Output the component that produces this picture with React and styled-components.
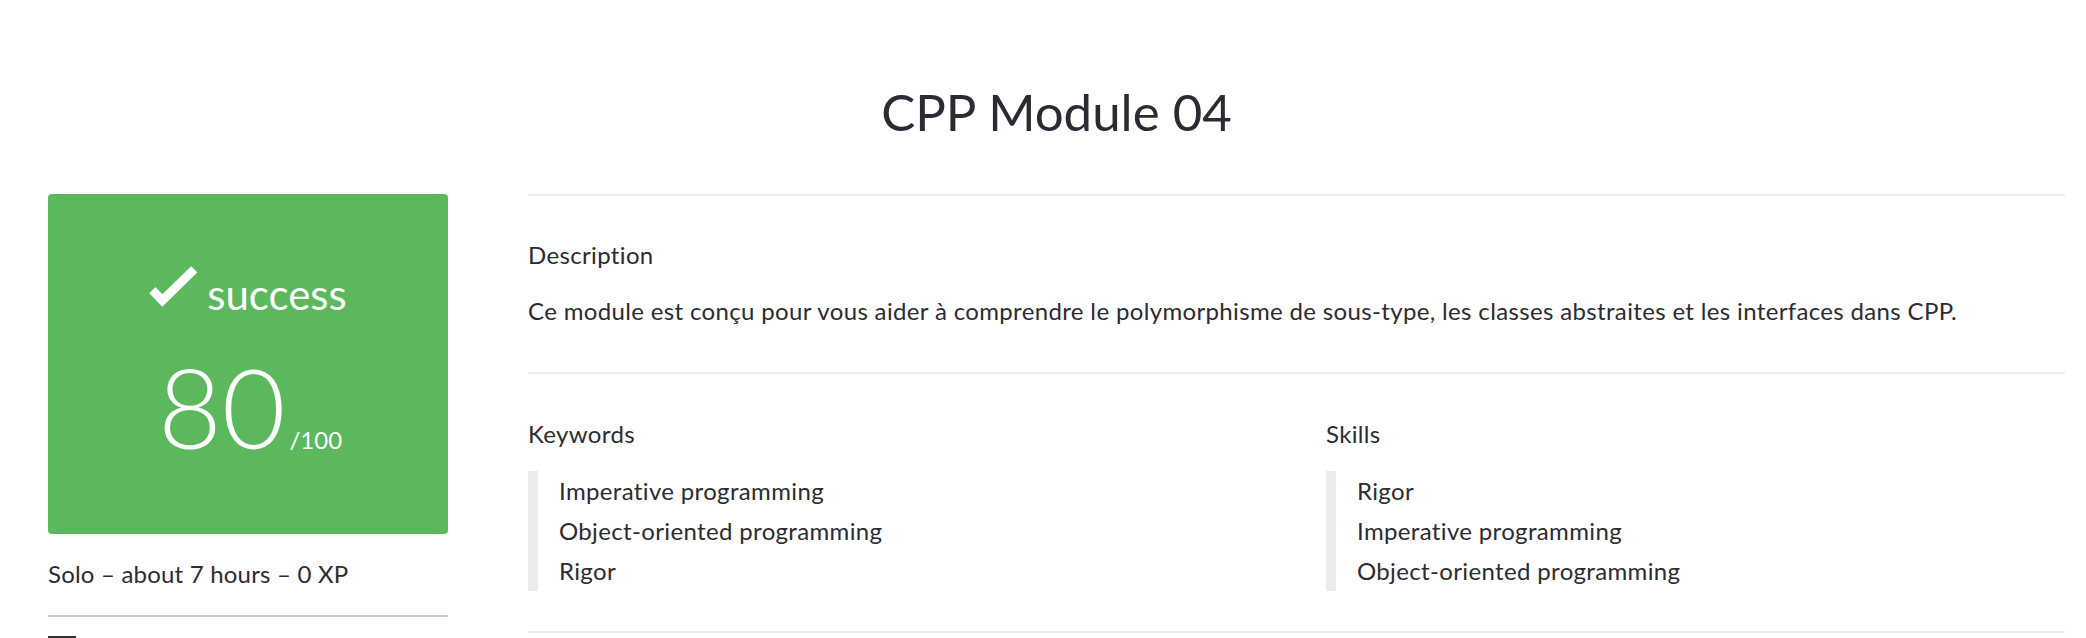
import React from "react";
import styled, { createGlobalStyle } from "styled-components";

const GlobalStyle = createGlobalStyle`
  html, body {
    margin: 0;
    padding: 0;
    background: #ffffff;
  }
  body {
    font-family: "Lato", "Noto Sans", sans-serif;
    color: #2b2b33;
  }
  * { box-sizing: border-box; }
`;

const Page = styled.div`
  padding: 0 21px 0 48px;
`;

const Title = styled.h1`
  margin: 80px 0 0;
  text-align: center;
  font-size: 51px;
  line-height: 64px;
  font-weight: 400;
  color: #2b2b33;
`;

const Main = styled.div`
  display: flex;
  gap: 80px;
  margin-top: 50px;
`;

const Aside = styled.aside`
  width: 400px;
  flex: none;
  display: flex;
  flex-direction: column;
`;

const ScoreBox = styled.div`
  height: 340px;
  background: #5cb85c;
  border-radius: 4px;
  color: #ffffff;
  display: flex;
  flex-direction: column;
  align-items: center;
  padding-top: 75px;
`;

const StatusRow = styled.div`
  display: flex;
  align-items: flex-start;
  gap: 10px;
  font-size: 42px;
  line-height: 50px;
`;

const CheckIcon = styled.svg`
  width: 48px;
  height: 41px;
  margin-top: -3px;
  fill: #ffffff;
`;

const ScoreRow = styled.div`
  margin-top: 31.5px;
  margin-left: 4px;
  font-size: 110px;
  line-height: 1;
  font-weight: 300;
`;

const OutOf = styled.span`
  font-size: 24px;
  margin-left: 4px;
  font-weight: 400;
`;

const Meta = styled.div`
  margin-top: 22.5px;
  font-size: 24px;
  letter-spacing: 0.2px;
  line-height: 34.5px;
`;

const AsideDivider = styled.hr`
  margin: 24px 0 0;
  border: 0;
  height: 2px;
  background: #cccccc;
`;

const StubMark = styled.div`
  margin-top: 18.5px;
  width: 28px;
  height: 2px;
  background: #333333;
`;

const Content = styled.section`
  flex: 1;
  border-top: 2px solid #ececec;
`;

const Block = styled.div`
  padding: ${(p) => p.$top}px 0 ${(p) => p.$bottom}px;
  border-bottom: 2px solid #ececec;
`;

const Columns = styled.div`
  display: grid;
  grid-template-columns: 1fr 1fr;
  column-gap: 59px;
`;

const Label = styled.div`
  font-size: 24px;
  letter-spacing: 0.35px;
  line-height: 34.5px;
`;

const Paragraph = styled.p`
  margin: 21.5px 0 0;
  font-size: 24px;
  letter-spacing: 0.35px;
  line-height: 34.5px;
`;

const TagList = styled.ul`
  list-style: none;
  margin: 20px 0 0;
  padding: 0 0 0 21px;
  border-left: 10px solid #ececec;
`;

const TagItem = styled.li`
  font-size: 24px;
  letter-spacing: 0.35px;
  line-height: 40px;
`;

const keywords = ["Imperative programming", "Object-oriented programming", "Rigor"];
const skills = ["Rigor", "Imperative programming", "Object-oriented programming"];

function ListColumn({ label, items }) {
  return (
    <div>
      <Label>{label}</Label>
      <TagList>
        {items.map((it) => (
          <TagItem key={it}>{it}</TagItem>
        ))}
      </TagList>
    </div>
  );
}

export default function App() {
  return (
    <>
      <GlobalStyle />
      <Page>
        <Title>CPP Module 04</Title>
        <Main>
          <Aside>
            <ScoreBox>
              <StatusRow>
                <CheckIcon viewBox="0 0 48 41">
                  <polygon points="13.3,40.7 0.3,27.2 6.5,21 13.3,28.2 42.2,0.2 48.4,6.4" />
                </CheckIcon>
                <span>success</span>
              </StatusRow>
              <ScoreRow>
                80<OutOf>/100</OutOf>
              </ScoreRow>
            </ScoreBox>
            <Meta>Solo – about 7 hours – 0 XP</Meta>
            <AsideDivider />
            <StubMark />
          </Aside>
          <Content>
            <Block $top={42} $bottom={43}>
              <Label>Description</Label>
              <Paragraph>
                Ce module est conçu pour vous aider à comprendre le polymorphisme de sous-type, les classes abstraites et les interfaces dans CPP.
              </Paragraph>
            </Block>
            <Block $top={43} $bottom={40}>
              <Columns>
                <ListColumn label="Keywords" items={keywords} />
                <ListColumn label="Skills" items={skills} />
              </Columns>
            </Block>
          </Content>
        </Main>
      </Page>
    </>
  );
}
